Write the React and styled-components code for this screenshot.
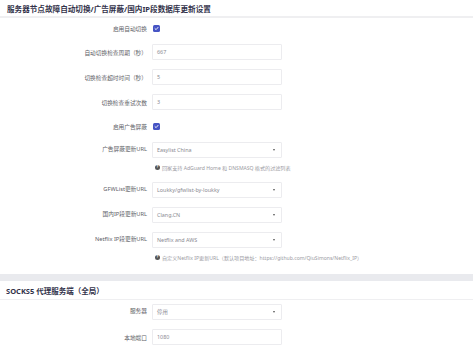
import React from "react";
import styled, { createGlobalStyle } from "styled-components";

const GlobalStyle = createGlobalStyle`
  html, body {
    margin: 0;
    padding: 0;
    background: #fff;
  }
  body {
    font-family: "Noto Sans", "Noto Sans CJK SC", sans-serif;
    color: #555;
  }
`;

const Page = styled.div`
  width: 473px;
  overflow: hidden;
`;

const Section = styled.section`
  background: #fff;
`;

const SectionHeader = styled.div`
  height: ${(p) => p.$h}px;
  display: flex;
  align-items: center;
  padding: 0 ${(p) => p.$pl}px;
  border-bottom: ${(p) => p.$bw}px solid #efeff1;
  box-sizing: border-box;
`;

const Title = styled.h3`
  margin: 0;
  font-size: ${(p) => p.$size}px;
  font-weight: 700;
  color: #32324a;
  white-space: nowrap;
`;

const Form = styled.div`
  display: flex;
  flex-direction: column;
  padding: ${(p) => p.$pt}px 0 ${(p) => p.$pb}px;
`;

const Row = styled.div`
  display: grid;
  grid-template-columns: 147px 130px;
  column-gap: 5px;
  align-items: center;
  height: ${(p) => (p.$check ? 14 : 16)}px;
  margin-bottom: 9px;
  &:last-child {
    margin-bottom: 0;
  }
`;

const HelpRow = styled.div`
  display: grid;
  grid-template-columns: 147px auto;
  column-gap: 5px;
  height: 14px;
  margin-top: -7px;
  margin-bottom: ${(p) => (p.$last ? 0 : 8)}px;
`;

const Help = styled.div`
  grid-column: 2;
  display: flex;
  align-items: center;
  padding-left: 3px;
  font-size: 5.1px;
  color: #9a9aa2;
  white-space: nowrap;
`;

const HelpIcon = styled.span`
  display: inline-flex;
  align-items: center;
  justify-content: center;
  width: 5px;
  height: 5px;
  border-radius: 50%;
  background: #555;
  color: #fff;
  font-size: 4px;
  font-weight: 700;
  margin-right: 2px;
  line-height: 1;
`;

const Label = styled.label`
  text-align: right;
  font-size: 5.7px;
  color: #5e5e66;
  white-space: nowrap;
  padding-bottom: ${(p) => (p.$raised ? 3 : 0)}px;
`;

const Input = styled.div`
  height: 16px;
  box-sizing: border-box;
  border: 1px solid #ececef;
  border-radius: 1px;
  background: #fff;
  display: flex;
  align-items: center;
  justify-content: space-between;
  padding: 0 6px 0 4px;
  font-size: 5.4px;
  color: #8a8a92;
  white-space: nowrap;
`;

const Arrow = styled.span`
  width: 0;
  height: 0;
  border-left: 1.5px solid transparent;
  border-right: 1.5px solid transparent;
  border-top: 2px solid #555;
`;

const Check = styled.span`
  width: 7px;
  height: 7px;
  border-radius: 1.5px;
  background: #4654c4;
  display: flex;
  align-items: center;
  justify-content: center;
  margin-left: 1px;
`;

const Band = styled.div`
  height: 7px;
  background: #e9eaee;
`;

function Checkbox() {
  return (
    <Check>
      <svg width="5" height="5" viewBox="0 0 10 10">
        <path d="M2 5.2 L4.2 7.3 L8 2.8" fill="none" stroke="#fff" strokeWidth="1.8" strokeLinecap="round" strokeLinejoin="round" />
      </svg>
    </Check>
  );
}

function Field({ label, value, select }) {
  return (
    <Row>
      <Label $raised={select}>{label}</Label>
      <Input>
        <span>{value}</span>
        {select && <Arrow />}
      </Input>
    </Row>
  );
}

function CheckField({ label }) {
  return (
    <Row $check>
      <Label>{label}</Label>
      <Checkbox />
    </Row>
  );
}

function HelpText({ children, last }) {
  return (
    <HelpRow $last={last}>
      <Help>
        <HelpIcon>?</HelpIcon>
        {children}
      </Help>
    </HelpRow>
  );
}

export default function App() {
  return (
    <Page>
      <GlobalStyle />
      <Section>
        <SectionHeader $h={18} $pl={7} $bw={2}>
          <Title $size={7.6}>服务器节点故障自动切换/广告屏蔽/国内IP段数据库更新设置</Title>
        </SectionHeader>
        <Form $pt={3} $pb={10}>
          <CheckField label="启用自动切换" />
          <Field label="自动切换检查周期（秒）" value="667" />
          <Field label="切换检查超时时间（秒）" value="5" />
          <Field label="切换检查重试次数" value="3" />
          <CheckField label="启用广告屏蔽" />
          <Field label="广告屏蔽更新URL" value="Easylist China" select />
          <HelpText>回家支持 AdGuard Home 和 DNSMASQ 格式的过滤列表</HelpText>
          <Field label="GFWList更新URL" value="Loukky/gfwlist-by-loukky" select />
          <Field label="国内IP段更新URL" value="Clang.CN" select />
          <Field label="Netflix IP段更新URL" value="Netflix and AWS" select />
          <HelpText last>
            自定义Netflix IP更新URL（默认项目地址：https://github.com/QiuSimons/Netflix_IP）
          </HelpText>
        </Form>
      </Section>
      <Band />
      <Section>
        <SectionHeader $h={19} $pl={6} $bw={1}>
          <Title $size={7.5}>SOCKS5 代理服务端（全局）</Title>
        </SectionHeader>
        <Form $pt={4} $pb={8}>
          <Field label="服务器" value="停用" select />
          <Field label="本地端口" value="1080" />
        </Form>
      </Section>
    </Page>
  );
}
